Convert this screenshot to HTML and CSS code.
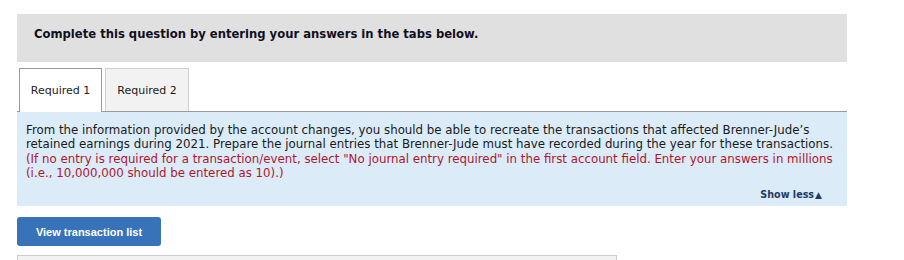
FILE: index.html
```html
<!DOCTYPE html>
<html>
<head>
<meta charset="utf-8">
<link rel="stylesheet" href="styles.css">
</head>
<body>
<div class="page">
  <div class="header">Complete this question by entering your answers in the tabs below.</div>
  <div class="tabs">
    <div class="tab active">Required 1</div>
    <div class="tab">Required 2</div>
  </div>
  <div class="panel">
    <p class="intro">From the information provided by the account changes, you should be able to recreate the transactions that affected Brenner-Jude’s retained earnings during 2021. Prepare the journal entries that Brenner-Jude must have recorded during the year for these transactions.</p>
    <p class="note">(If no entry is required for a transaction/event, select "No journal entry required" in the first account field. Enter your answers in millions (i.e., 10,000,000 should be entered as 10).)</p>
    <div class="toggle-row"><span class="toggle">Show less<span class="arrow">▲</span></span></div>
  </div>
  <div class="actions"><button class="btn">View transaction list</button></div>
  <div class="table-box"></div>
</div>
</body>
</html>
```

FILE: styles.css
```css
html, body { margin: 0; padding: 0; background: #fff; overflow: hidden; }
body { font-family: "DejaVu Sans", Verdana, sans-serif; color: #111; }
.page { padding: 14px 0 0 17px; width: 830px; }
.header {
  background: #e0e0e0;
  height: 48px;
  box-sizing: border-box;
  padding: 13px 0 0 17px;
  font-size: 11.6px;
  font-weight: bold;
  color: #10101c;
}
.tabs {
  display: flex;
  gap: 3px;
  margin-top: 6px;
  padding-left: 2px;
  border-bottom: 1px solid #9a9a9a;
  height: 43px;
}
.tab {
  box-sizing: border-box;
  height: 43px;
  padding-top: 15px;
  text-align: center;
  white-space: nowrap;
  font-size: 11px;
  border: 1px solid #cfcfcf;
  border-bottom: none;
  background: #f2f2f2;
  color: #1a1a1a;
  width: 84px;
}
.tab.active {
  background: #fff;
  border-color: #9a9a9a;
  height: 44px;
  width: 83px;
  position: relative;
  z-index: 1;
  color: #222;
}
.panel {
  background: #dbebf8;
  height: 94px;
  box-sizing: border-box;
  padding: 11px 9px 0 9px;
}
.intro, .note {
  margin: 0;
  font-size: 11.8px;
  line-height: 14.3px;
  color: #1a1a1a;
}
.note { color: #b0152d; }
.toggle-row { display: flex; justify-content: flex-end; padding-right: 16px; margin-top: 9px; }
.toggle { font-size: 9.6px; font-weight: bold; color: #1e3a64; }
.arrow { font-size: 9px; margin-left: 1px; }
.actions { margin-top: 11px; }
.btn {
  width: 144px;
  height: 29px;
  background: #3873b9;
  border: none;
  border-radius: 3px;
  color: #fff;
  font-family: "Liberation Sans", Arial, sans-serif;
  font-weight: bold;
  font-size: 11px;
  padding: 0;
}
.table-box {
  margin-top: 9px;
  width: 598px;
  height: 20px;
  border: 1px solid #cccccc;
  background: #f2f2f2;
}
```
